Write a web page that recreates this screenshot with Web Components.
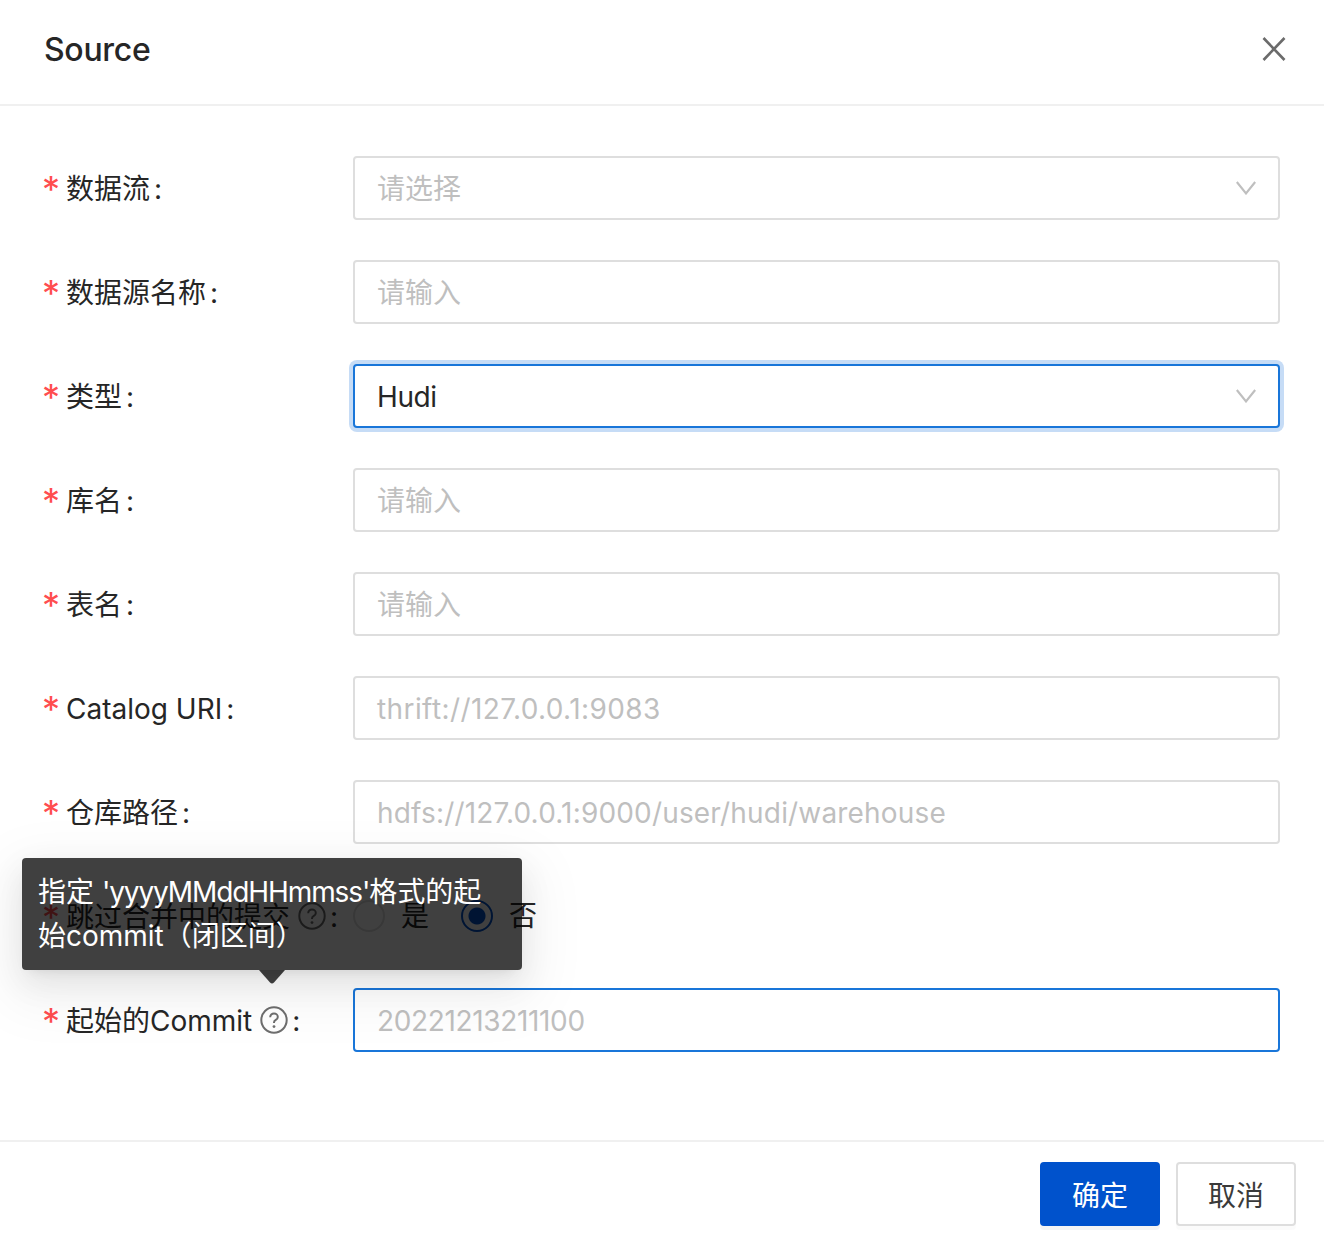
<!DOCTYPE html>
<html lang="zh">
<head>
<meta charset="utf-8">
<title>Source</title>
<style>
  html, body { margin: 0; height: 100%; background: #fff; }
  body { font-family: Inter, "Noto Sans CJK SC", sans-serif; font-size: 28px; color: #262626; }
  .tight { letter-spacing: -1.1px; }
</style>
</head>
<body>
<source-modal heading="Source">
  <form-row label="数据流"><select-box placeholder="请选择"></select-box></form-row>
  <form-row label="数据源名称"><text-box placeholder="请输入"></text-box></form-row>
  <form-row label="类型"><select-box value="Hudi" focused style="letter-spacing:-.4px"></select-box></form-row>
  <form-row label="库名"><text-box placeholder="请输入"></text-box></form-row>
  <form-row label="表名"><text-box placeholder="请输入"></text-box></form-row>
  <form-row label="Catalog URI"><text-box placeholder="thrift://127.0.0.1:9083" style="letter-spacing:.4px"></text-box></form-row>
  <form-row label="仓库路径"><text-box placeholder="hdfs://127.0.0.1:9000/user/hudi/warehouse" style="letter-spacing:.17px"></text-box></form-row>
  <form-row label="跳过合并中的提交" help>
    <radio-item>是</radio-item>
    <radio-item checked>否</radio-item>
  </form-row>
  <form-row label="起始的Commit" help><text-box placeholder="20221213211100" active style="letter-spacing:-.35px"></text-box></form-row>
  <modal-button slot="footer" primary>确定</modal-button>
  <modal-button slot="footer">取消</modal-button>
  <dark-tooltip slot="overlay">指定 <span class="tight">'yyyyMMddHHmmss'</span>格式的起始commit（闭区间）</dark-tooltip>
</source-modal>

<script>
const modalTemplate = document.createElement("template")
modalTemplate.innerHTML = /*html*/ `
  <style>
    :host {
      display: flex;
      flex-direction: column;
      position: relative;
      height: 100vh;
      background: #fff;
    }
    .modal__header {
      display: flex;
      justify-content: space-between;
      align-items: center;
      height: 100px;
      padding: 0 36px 4px 44px;
      border-bottom: 2px solid #f0f0f0;
    }
    .modal__title {
      font-size: 32px;
      line-height: 44px;
      font-weight: 500;
      letter-spacing: -.3px;
      color: #262626;
    }
    .modal__close { display: block; width: 28px; height: 28px; position: relative; top: -1px; }
    .modal__body {
      flex: 1;
      display: flex;
      flex-direction: column;
      gap: 40px;
      padding: 50px 44px 0;
    }
    .modal__footer {
      display: flex;
      justify-content: flex-end;
      gap: 16px;
      padding: 20px 28px 18px;
      border-top: 2px solid #f0f0f0;
    }
  </style>
  <header class="modal__header">
    <span class="modal__title"></span>
    <svg class="modal__close" viewBox="0 0 28 28" fill="none" stroke="#6b6b6b" stroke-width="2.6">
      <path d="M3.5 3 L24.5 25 M24.5 3 L3.5 25"/>
    </svg>
  </header>
  <section class="modal__body"><slot></slot></section>
  <footer class="modal__footer"><slot name="footer"></slot></footer>
  <slot name="overlay"></slot>
`

class SourceModal extends HTMLElement {
  connectedCallback() {
    this.attachShadow({ mode: "open" })
    this.shadowRoot.appendChild(modalTemplate.content.cloneNode(true))
    this.shadowRoot.querySelector(".modal__title").textContent = this.getAttribute("heading")
  }
}

const rowTemplate = document.createElement("template")
rowTemplate.innerHTML = /*html*/ `
  <style>
    :host { display: flex; height: 64px; align-items: center; }
    .row__label {
      flex: 0 0 309px;
      display: flex;
      align-items: center;
      white-space: nowrap;
      color: #262626;
      line-height: 44px;
    }
    .row__star {
      width: 24px;
      margin-left: -2px;
      color: #ff4d4f;
      font-size: 36px;
      line-height: 44px;
      position: relative;
      top: 1px;
    }
    .row__text, .row__colon { padding-top: 2px; }
    .row__help { display: none; width: 28px; height: 28px; margin-left: 8px; }
    :host([help]) .row__help { display: block; }
    .row__colon { margin-left: 4px; }
    .row__control { flex: 1; display: flex; align-items: center; min-width: 0; }
  </style>
  <div class="row__label">
    <span class="row__star">*</span>
    <span class="row__text"></span>
    <svg class="row__help" viewBox="0 0 28 28" fill="none">
      <circle cx="14" cy="14" r="12.7" stroke="#6e6e6e" stroke-width="2"/>
      <path d="M10.2 11.2c0-2.2 1.7-3.6 3.8-3.6s3.8 1.4 3.8 3.3c0 1.5-.9 2.3-2 3-1.1.7-1.8 1.2-1.8 2.6v.6" stroke="#6e6e6e" stroke-width="2"/>
      <circle cx="14" cy="20.6" r="1.4" fill="#6e6e6e"/>
    </svg>
    <span class="row__colon">:</span>
  </div>
  <div class="row__control"><slot></slot></div>
`

class FormRow extends HTMLElement {
  connectedCallback() {
    this.attachShadow({ mode: "open" })
    this.shadowRoot.appendChild(rowTemplate.content.cloneNode(true))
    this.shadowRoot.querySelector(".row__text").textContent = this.getAttribute("label")
  }
}

const boxStyles = /*html*/ `
  <style>
    :host {
      display: flex;
      flex: 1;
      align-items: center;
      justify-content: space-between;
      box-sizing: border-box;
      height: 64px;
      padding: 0 22px;
      border: 2px solid #dedede;
      border-radius: 4px;
      background: #fff;
      line-height: 44px;
      color: #262626;
      min-width: 0;
    }
    :host([active]), :host([focused]) { border-color: #1976d9; }
    :host([focused]) { box-shadow: 0 0 0 4px #c6dcf6; }
    span { padding-top: 2px; }
    .box__placeholder { color: #bfbfbf; }
    svg { display: block; width: 20px; height: 14px; }
  </style>
`

class TextBox extends HTMLElement {
  connectedCallback() {
    this.attachShadow({ mode: "open" })
    this.shadowRoot.innerHTML = `${boxStyles}<span class="box__placeholder">${this.getAttribute("placeholder")}</span>`
  }
}

class SelectBox extends HTMLElement {
  connectedCallback() {
    this.attachShadow({ mode: "open" })
    const value = this.getAttribute("value")
    const text = value
      ? `<span>${value}</span>`
      : `<span class="box__placeholder">${this.getAttribute("placeholder")}</span>`
    this.shadowRoot.innerHTML = `${boxStyles}${text}
      <svg viewBox="0 0 20 14" fill="none" stroke="#bfbfbf" stroke-width="2.2">
        <path d="M.8 1 L10 12.4 L19.2 1"/>
      </svg>`
  }
}

const radioTemplate = document.createElement("template")
radioTemplate.innerHTML = /*html*/ `
  <style>
    :host { display: inline-flex; align-items: center; margin-right: 32px; }
    .radio__dot {
      box-sizing: border-box;
      width: 32px;
      height: 32px;
      margin-right: 16px;
      border: 2px solid #dedede;
      border-radius: 50%;
      background: #fff;
    }
    :host([checked]) .radio__dot {
      border-color: #0052cc;
      background: radial-gradient(circle, #0052cc 0 8px, #fff 9px);
    }
    .radio__text { line-height: 44px; }
  </style>
  <span class="radio__dot"></span>
  <span class="radio__text"><slot></slot></span>
`

class RadioItem extends HTMLElement {
  connectedCallback() {
    this.attachShadow({ mode: "open" })
    this.shadowRoot.appendChild(radioTemplate.content.cloneNode(true))
  }
}

const buttonTemplate = document.createElement("template")
buttonTemplate.innerHTML = /*html*/ `
  <style>
    :host {
      display: flex;
      align-items: center;
      justify-content: center;
      box-sizing: border-box;
      width: 120px;
      height: 64px;
      border: 2px solid #dedede;
      border-radius: 4px;
      background: #fff;
      color: #3a3a3a;
      box-shadow: 0 4px 0 rgba(0, 0, 0, .015);
    }
    :host([primary]) {
      border-color: #0052cc;
      background: #0052cc;
      color: #fff;
      box-shadow: 0 4px 0 rgba(0, 0, 0, .04);
    }
  </style>
  <slot></slot>
`

class ModalButton extends HTMLElement {
  connectedCallback() {
    this.attachShadow({ mode: "open" })
    this.shadowRoot.appendChild(buttonTemplate.content.cloneNode(true))
  }
}

const tooltipTemplate = document.createElement("template")
tooltipTemplate.innerHTML = /*html*/ `
  <style>
    :host {
      position: absolute;
      left: 22px;
      top: 858px;
      box-sizing: border-box;
      width: 500px;
      height: 112px;
      padding: 12px 16px;
      border-radius: 4px;
      background: rgba(0, 0, 0, .75);
      color: #fff;
      line-height: 44px;
      box-shadow: 0 6px 12px -8px rgba(0, 0, 0, .12), 0 12px 32px 0 rgba(0, 0, 0, .08), 0 18px 56px 16px rgba(0, 0, 0, .05);
    }
    .tooltip__arrow {
      position: absolute;
      left: 231px;
      top: 100%;
      width: 38px;
      height: 14px;
      display: block;
    }
  </style>
  <slot></slot>
  <svg class="tooltip__arrow" viewBox="0 0 38 14">
    <path d="M6 0 L17 12.6 Q19 14.4 21 12.6 L32 0 Z" fill="rgba(0,0,0,.75)"/>
  </svg>
`

class DarkTooltip extends HTMLElement {
  connectedCallback() {
    this.attachShadow({ mode: "open" })
    this.shadowRoot.appendChild(tooltipTemplate.content.cloneNode(true))
  }
}

customElements.define("source-modal", SourceModal)
customElements.define("form-row", FormRow)
customElements.define("text-box", TextBox)
customElements.define("select-box", SelectBox)
customElements.define("radio-item", RadioItem)
customElements.define("modal-button", ModalButton)
customElements.define("dark-tooltip", DarkTooltip)
</script>
</body>
</html>
